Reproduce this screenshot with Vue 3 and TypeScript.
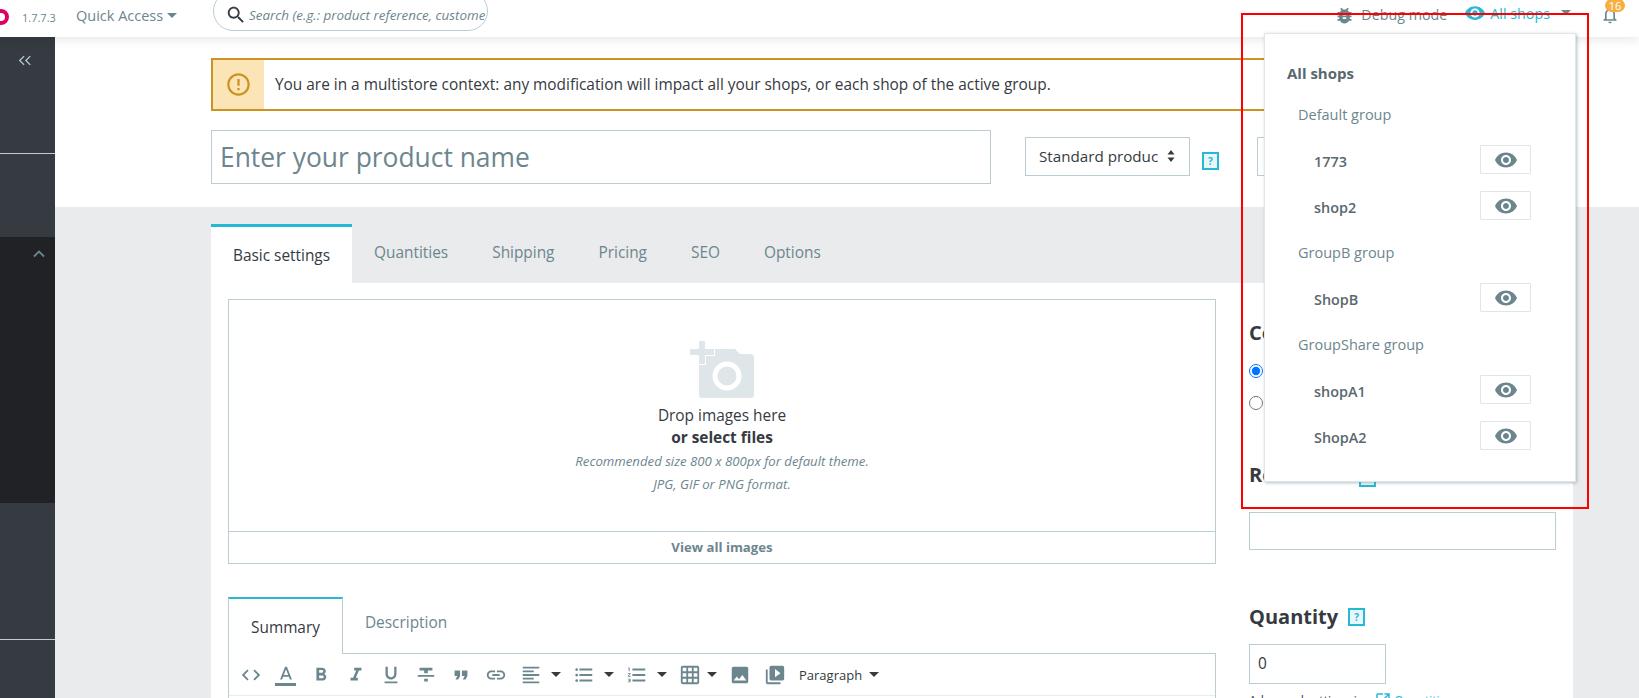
<script setup lang="ts">
interface Shop { name: string }
interface Group { name: string; shops: Shop[] }
interface Tool { d: string; caret?: boolean; bar?: boolean; narrow?: boolean }

const eye = 'M12 4.5C7 4.5 2.73 7.61 1 12c1.73 4.39 6 7.5 11 7.5s9.27-3.11 11-7.5c-1.73-4.39-6-7.5-11-7.5zM12 17c-2.76 0-5-2.24-5-5s2.24-5 5-5 5 2.24 5 5-2.24 5-5 5zm0-8c-1.66 0-3 1.34-3 3s1.34 3 3 3 3-1.34 3-3-1.34-3-3-3z';
const bug = 'M20 8h-2.81c-.45-.78-1.07-1.45-1.82-1.96L17 4.41 15.59 3l-2.17 2.17C12.96 5.06 12.49 5 12 5c-.49 0-.96.06-1.41.17L8.41 3 7 4.41l1.62 1.63C7.88 6.55 7.26 7.22 6.81 8H4v2h2.09c-.05.33-.09.66-.09 1v1H4v2h2v1c0 .34.04.67.09 1H4v2h2.81c1.04 1.79 2.97 3 5.19 3s4.15-1.21 5.19-3H20v-2h-2.09c.05-.33.09-.66.09-1v-1h2v-2h-2v-1c0-.34-.04-.67-.09-1H20V8zm-6 8h-4v-2h4v2zm0-4h-4v-2h4v2z';
const search = 'M15.5 14h-.79l-.28-.27C15.41 12.59 16 11.11 16 9.5 16 5.91 13.09 3 9.5 3S3 5.91 3 9.5 5.91 16 9.5 16c1.61 0 3.09-.59 4.23-1.57l.27.28v.79l5 4.99L20.49 19l-4.99-5zm-6 0C7.01 14 5 11.99 5 9.5S7.01 5 9.5 5 14 7.01 14 9.5 11.99 14 9.5 14z';
const bell = 'M12 22c1.1 0 2-.9 2-2h-4c0 1.1.9 2 2 2zm6-6v-5c0-3.07-1.63-5.64-4.5-6.32V4c0-.83-.67-1.5-1.5-1.5s-1.5.67-1.5 1.5v.68C7.64 5.36 6 7.92 6 11v5l-2 2v1h16v-1l-2-2zm-2 1H8v-6c0-2.48 1.51-4.5 4-4.5s4 2.02 4 4.5v6z';
const warn = 'M11 15h2v2h-2zm0-8h2v6h-2zm.99-5C6.47 2 2 6.48 2 12s4.47 10 9.99 10C17.52 22 22 17.52 22 12S17.52 2 11.99 2zM12 20c-4.42 0-8-3.58-8-8s3.58-8 8-8 8 3.58 8 8-3.58 8-8 8z';
const launch = 'M19 19H5V5h7V3H5c-1.11 0-2 .9-2 2v14c0 1.1.89 2 2 2h14c1.1 0 2-.9 2-2v-7h-2v7zM14 3v2h3.59l-9.83 9.83 1.41 1.41L19 6.41V10h2V3h-7z';

const tabs = ['Quantities', 'Shipping', 'Pricing', 'SEO', 'Options'];

const groups: Group[] = [
  { name: 'Default group', shops: [{ name: '1773' }, { name: 'shop2' }] },
  { name: 'GroupB group', shops: [{ name: 'ShopB' }] },
  { name: 'GroupShare group', shops: [{ name: 'shopA1' }, { name: 'ShopA2' }] },
];

const tools: Tool[] = [
  { d: 'M9.4 16.6L4.8 12l4.6-4.6L8 6l-6 6 6 6 1.4-1.4zm5.2 0l4.6-4.6-4.6-4.6L16 6l6 6-6 6-1.4-1.4z' },
  { d: 'M11 3L5.5 17h2.25l1.12-3h6.25l1.12 3h2.25L13 3h-2zm-1.38 9L12 5.67 14.38 12H9.62z', bar: true },
  { d: 'M15.6 10.79c.97-.67 1.65-1.77 1.65-2.79 0-2.26-1.75-4-4-4H7v14h7.04c2.09 0 3.71-1.7 3.71-3.79 0-1.52-.86-2.82-2.15-3.42zM10 6.5h3c.83 0 1.5.67 1.5 1.5s-.67 1.5-1.5 1.5h-3v-3zm3.5 9H10v-3h3.5c.83 0 1.5.67 1.5 1.5s-.67 1.5-1.5 1.5z' },
  { d: 'M10 4v3h2.21l-3.42 8H6v3h8v-3h-2.21l3.42-8H18V4z' },
  { d: 'M12 17c3.31 0 6-2.69 6-6V3h-2.5v8c0 1.93-1.57 3.5-3.5 3.5S8.5 12.93 8.5 11V3H6v8c0 3.31 2.69 6 6 6zm-7 2v2h14v-2H5z' },
  { d: 'M10 19h4v-3h-4v3zM5 4v3h5v3h4V7h5V4H5zM3 14h18v-2H3v2z' },
  { d: 'M6 17h3l2-4V7H5v6h3zm8 0h3l2-4V7h-6v6h3z' },
  { d: 'M3.9 12c0-1.71 1.39-3.1 3.1-3.1h4V7H7c-2.76 0-5 2.24-5 5s2.24 5 5 5h4v-1.9H7c-1.71 0-3.1-1.39-3.1-3.1zM8 13h8v-2H8v2zm9-6h-4v1.9h4c1.71 0 3.1 1.39 3.1 3.1s-1.39 3.1-3.1 3.1h-4V17h4c2.76 0 5-2.24 5-5s-2.24-5-5-5z' },
  { d: 'M15 15H3v2h12v-2zm0-8H3v2h12V7zM3 13h18v-2H3v2zm0 8h18v-2H3v2zM3 3v2h18V3H3z', caret: true },
  { d: 'M4 10.5c-.83 0-1.5.67-1.5 1.5s.67 1.5 1.5 1.5 1.5-.67 1.5-1.5-.67-1.5-1.5-1.5zm0-6c-.83 0-1.5.67-1.5 1.5S3.17 7.5 4 7.5 5.5 6.83 5.5 6 4.83 4.5 4 4.5zm0 12c-.83 0-1.5.68-1.5 1.5s.68 1.5 1.5 1.5 1.5-.68 1.5-1.5-.67-1.5-1.5-1.5zM7 19h14v-2H7v2zm0-6h14v-2H7v2zm0-8v2h14V5H7z', caret: true },
  { d: 'M2 17h2v.5H3v1h1v.5H2v1h3v-4H2v1zm1-9h1V4H2v1h1v3zm-1 3h1.8L2 13.1v.9h3v-1H3.2L5 10.9V10H2v1zm5-6v2h14V5H7zm0 14h14v-2H7v2zm0-6h14v-2H7v2z', caret: true },
  { d: 'M20 2H4c-1.1 0-2 .9-2 2v16c0 1.1.9 2 2 2h16c1.1 0 2-.9 2-2V4c0-1.1-.9-2-2-2zM8 20H4v-4h4v4zm0-6H4v-4h4v4zm0-6H4V4h4v4zm6 12h-4v-4h4v4zm0-6h-4v-4h4v4zm0-6h-4V4h4v4zm6 12h-4v-4h4v4zm0-6h-4v-4h4v4zm0-6h-4V4h4v4z', caret: true, narrow: true },
  { d: 'M21 19V5c0-1.1-.9-2-2-2H5c-1.1 0-2 .9-2 2v14c0 1.1.9 2 2 2h14c1.1 0 2-.9 2-2zM8.5 13.5l2.5 3.01L14.5 12l4.5 6H5l3.5-4.5z' },
  { d: 'M4 6H2v14c0 1.1.9 2 2 2h14v-2H4V6zm16-4H8c-1.1 0-2 .9-2 2v12c0 1.1.9 2 2 2h12c1.1 0 2-.9 2-2V4c0-1.1-.9-2-2-2zm-8 12.5v-9l6 4.5-6 4.5z' },
];
</script>

<template>
  <div class="page">
    <header class="topbar">
      <span class="logo"></span>
      <span class="version">1.7.7.3</span>
      <span class="quick">Quick Access<i class="caret"></i></span>
      <div class="search">
        <svg class="search-ico" viewBox="0 0 24 24"><path :d="search" /></svg>
        <span class="search-text">Search (e.g.: product reference, custome</span>
      </div>
      <div class="top-right">
        <svg class="bug" viewBox="0 0 24 24"><path :d="bug" /></svg>
        <span class="debug">Debug mode</span>
        <svg class="shop-eye" viewBox="0 0 24 24"><path :d="eye" /></svg>
        <span class="shops-link">All shops</span>
        <i class="caret shops-caret"></i>
        <div class="bell-wrap">
          <svg class="bell" viewBox="0 0 24 24"><path :d="bell" /></svg>
          <span class="badge">16</span>
        </div>
      </div>
    </header>

    <div class="body">
      <aside class="sidebar">
        <div class="nav-top">
          <svg class="collapse" viewBox="0 0 16 12"><path d="M7 1L2 6l5 5M14 1L9 6l5 5" /></svg>
        </div>
        <div class="nav-band"></div>
        <div class="nav-open">
          <svg class="chev" viewBox="0 0 12 8"><path d="M1 6.5l5-5 5 5" /></svg>
          <span class="nav-s">s</span>
        </div>
        <div class="nav-band nav-lined"></div>
      </aside>

      <main class="main">
        <section class="head">
          <div class="alert">
            <div class="alert-ico">
              <svg viewBox="0 0 24 24"><path :d="warn" /></svg>
            </div>
            <p>You are in a multistore context: any modification will impact all your shops, or each shop of the active group.</p>
          </div>
          <div class="name-row">
            <div class="name-input">Enter your product name</div>
            <div class="type-select">
              <span>Standard produc</span>
              <svg viewBox="0 0 10 14"><path d="M5 1l3.5 4.5h-7zM5 13L1.5 8.5h7z" /></svg>
            </div>
            <span class="help">?</span>
            <div class="name-extra"></div>
          </div>
        </section>

        <section class="content">
          <nav class="tabs">
            <span class="tab tab-active">Basic settings</span>
            <span v-for="t in tabs" :key="t" class="tab">{{ t }}</span>
          </nav>
          <div class="card">
            <div class="left">
              <div class="dropzone">
                <div class="drop-body">
                  <svg class="camera" viewBox="0 0 65 57">
                    <path d="M9 14h12V8h24l5 5h10a4 4 0 0 1 4 4v37a3 3 0 0 1-3 3H12a3 3 0 0 1-3-3z" />
                    <path d="M9 0h6v8h9v6h-9v9H9v-9H0V8h9z" stroke="#fff" stroke-width="2" paint-order="stroke" />
                    <circle cx="37" cy="35" r="12" fill="none" stroke="#fff" stroke-width="5" />
                  </svg>
                  <div class="drop-title">Drop images here</div>
                  <div class="drop-select">or select files</div>
                  <div class="drop-note">Recommended size 800 x 800px for default theme.</div>
                  <div class="drop-note">JPG, GIF or PNG format.</div>
                </div>
                <div class="drop-foot">View all images</div>
              </div>

              <div class="editor-tabs">
                <span class="etab etab-active">Summary</span>
                <span class="etab">Description</span>
                <span class="etab-rest"></span>
              </div>
              <div class="editor">
                <div class="toolbar">
                  <span v-for="(tool, i) in tools" :key="i" class="tool" :class="{ 'has-caret': tool.caret, narrow: tool.narrow }">
                    <span class="tool-ico">
                      <svg viewBox="0 0 24 24"><path :d="tool.d" /></svg>
                      <i v-if="tool.bar" class="color-bar"></i>
                    </span>
                    <i v-if="tool.caret" class="caret tool-caret"></i>
                  </span>
                  <span class="para">Paragraph<i class="caret"></i></span>
                </div>
              </div>
            </div>

            <div class="right">
              <h2 class="combi-title">Combinations</h2>
              <label class="radio"><input type="radio" name="kind" checked /> Simple product</label>
              <label class="radio"><input type="radio" name="kind" /> Product with combinations</label>
              <h2 class="ref-title">Reference <span class="help">?</span></h2>
              <div class="ref-input"></div>
              <h2 class="qty-title">Quantity <span class="help">?</span></h2>
              <div class="qty-input">0</div>
              <p class="adv">Advanced settings in
                <svg viewBox="0 0 24 24"><path :d="launch" /></svg><a>Quantities</a>
              </p>
            </div>
          </div>
        </section>
      </main>
    </div>

    <div class="shop-menu">
      <div class="menu-all">All shops</div>
      <template v-for="g in groups" :key="g.name">
        <div class="menu-group">{{ g.name }}</div>
        <div v-for="s in g.shops" :key="s.name" class="menu-shop">
          <span>{{ s.name }}</span>
          <span class="eye-btn"><svg viewBox="0 0 24 24"><path :d="eye" /></svg></span>
        </div>
      </template>
    </div>

    <div class="red-mark"></div>
  </div>
</template>

<style>
html, body { margin: 0; background: #fff; }
</style>

<style scoped>
.page {
  position: relative;
  width: 1639px;
  height: 698px;
  overflow: hidden;
  display: flex;
  flex-direction: column;
  font-family: "Open Sans", "Noto Sans", sans-serif;
  color: #363a41;
}
.caret {
  display: inline-block;
  width: 0;
  height: 0;
  border-left: 5px solid transparent;
  border-right: 5px solid transparent;
  border-top: 5px solid #6c868e;
}

/* top bar */
.topbar {
  position: relative;
  z-index: 3;
  height: 37px;
  flex: none;
  display: flex;
  align-items: center;
  background: #fff;
  box-shadow: 0 0 14px rgba(0, 0, 0, .14);
}
.logo {
  width: 16px;
  height: 16px;
  margin: -4px 0 0 -7px;
  box-sizing: border-box;
  border: 4px solid #df0067;
  border-radius: 50%;
}
.version {
  margin-left: 13px;
  width: 54px;
  font-size: 11px;
  color: #6c868e;
  margin-top: -2px;
}
.quick {
  font-size: 14.5px;
  color: #6c868e;
  display: flex;
  align-items: center;
  gap: 4px;
  width: 137px;
  margin-top: -6px;
}
.search {
  width: 275px;
  height: 40px;
  margin-top: -15px;
  box-sizing: border-box;
  border: 1px solid #bbcdd2;
  border-radius: 20px;
  display: flex;
  align-items: center;
  padding: 8px 0 0 11px;
  overflow: hidden;
  white-space: nowrap;
}
.search-ico { width: 22px; height: 22px; flex: none; fill: #363a41; }
.search-text {
  margin-left: 2px;
  font-size: 13.4px;
  font-style: italic;
  color: #6c868e;
}
.top-right {
  margin-left: auto;
  display: flex;
  align-items: center;
  height: 100%;
}
.bug { width: 21px; height: 21px; fill: #6c868e; margin-top: -6px; margin-left: -2px; }
.debug { margin-left: 6px; font-size: 14.3px; color: #6c868e; margin-top: -8px; }
.shop-eye { width: 22px; height: 22px; fill: #25b9d7; margin-left: 17px; margin-top: -11px; }
.shops-link { margin-left: 4px; font-size: 14.3px; color: #25b9d7; margin-top: -11px; }
.shops-caret { margin-left: 11px; margin-top: -13px; }
.bell-wrap { position: relative; width: 68px; height: 100%; }
.bell {
  position: absolute;
  left: 29px;
  top: 5px;
  width: 20px;
  height: 20px;
  fill: #6c868e;
}
.badge {
  position: absolute;
  left: 34px;
  top: -1px;
  width: 20px;
  height: 13px;
  border-radius: 7px;
  background: #f5b041;
  color: #fff;
  font-size: 11px;
  line-height: 13px;
  text-align: center;
}

.body { flex: 1; display: flex; min-height: 0; }

/* sidebar */
.sidebar {
  width: 55px;
  flex: none;
  display: flex;
  flex-direction: column;
  background: #363a41;
}
.nav-top {
  height: 117px;
  flex: none;
  box-sizing: border-box;
  border-bottom: 1px solid #bbcdd2;
  padding: 18px 0 0 18px;
}
.collapse { display: block; width: 14px; height: 11px; fill: none; stroke: #bbcdd2; stroke-width: 1.5; }
.nav-band { height: 83px; flex: none; }
.nav-open {
  position: relative;
  height: 266px;
  flex: none;
  background: #202226;
}
.chev {
  position: absolute;
  left: 33px;
  top: 13px;
  width: 12px;
  height: 8px;
  fill: none;
  stroke: #6c868e;
  stroke-width: 1.8;
}
.nav-s {
  position: absolute;
  left: -5px;
  top: 127px;
  font-size: 10px;
  color: #bbcdd2;
}
.nav-lined {
  flex: 1;
  box-sizing: border-box;
  height: auto;
  background: linear-gradient(#363a41 136px, #bbcdd2 136px, #bbcdd2 137px, #363a41 137px);
}

/* product head */
.main { flex: 1; min-width: 0; display: flex; flex-direction: column; }
.head {
  height: 170px;
  flex: none;
  box-sizing: border-box;
  padding: 21px 0 0 156px;
  background: #fff;
}
.alert {
  width: 1345px;
  height: 53px;
  box-sizing: border-box;
  border: 2px solid #cd9321;
  display: flex;
  align-items: center;
}
.alert-ico {
  width: 51px;
  height: 100%;
  flex: none;
  background: #fbe4b5;
  display: flex;
  align-items: center;
  justify-content: center;
}
.alert-ico svg { width: 27px; height: 27px; fill: #cd9321; }
.alert p { margin: 0 0 0 11px; font-size: 15.4px; color: #363a41; }
.name-row { display: flex; align-items: flex-start; margin-top: 19px; }
.name-input {
  width: 780px;
  height: 54px;
  box-sizing: border-box;
  border: 1px solid #bbcdd2;
  padding-left: 8px;
  font-size: 26.4px;
  line-height: 52px;
  color: #6c868e;
}
.type-select {
  width: 165px;
  height: 39px;
  margin: 7px 0 0 34px;
  box-sizing: border-box;
  border: 1px solid #bbcdd2;
  display: flex;
  align-items: center;
  justify-content: space-between;
  padding: 0 13px 2px;
  font-size: 15.2px;
  white-space: nowrap;
  overflow: hidden;
}
.type-select svg { width: 10px; height: 14px; fill: #363a41; flex: none; }
.help {
  display: inline-block;
  width: 17px;
  height: 18px;
  box-sizing: border-box;
  border: 2px solid #25b9d7;
  background: #e8f7fa;
  color: #25b9d7;
  font-size: 10px;
  font-weight: 700;
  line-height: 14px;
  text-align: center;
}
.name-row > .help { margin: 22px 0 0 12px; }
.name-extra {
  width: 200px;
  height: 39px;
  margin: 7px 0 0 38px;
  box-sizing: border-box;
  border: 1px solid #bbcdd2;
}

/* gray area with tabs */
.content {
  flex: 1;
  min-height: 0;
  box-sizing: border-box;
  padding: 17px 66px 0 156px;
  background: #eaebec;
}
.tabs { display: flex; height: 59px; }
.tab {
  padding: 0 22px;
  font-size: 15.4px;
  line-height: 58px;
  color: #6c868e;
}
.tab-active {
  background: #fff;
  border-top: 3px solid #25b9d7;
  height: 56px;
  line-height: 57px;
  color: #363a41;
}
.card {
  display: flex;
  background: #fff;
  padding: 16px 17px 0;
  height: 420px;
  box-sizing: border-box;
}
.left { width: 988px; flex: none; }
.dropzone { height: 265px; box-sizing: border-box; border: 1px solid #bbcdd2; display: flex; flex-direction: column; }
.drop-body { flex: 1; display: flex; flex-direction: column; align-items: center; padding-top: 41px; }
.camera { width: 65px; height: 57px; fill: #dfe6e9; }
.drop-title { margin-top: 7px; font-size: 15.4px; line-height: 22px; }
.drop-select { font-size: 15.4px; font-weight: 700; line-height: 22px; }
.drop-note { font-size: 13.2px; font-style: italic; color: #6c868e; line-height: 23px; }
.drop-select + .drop-note { margin-top: 1px; }
.drop-foot {
  height: 31px;
  flex: none;
  border-top: 1px solid #bbcdd2;
  text-align: center;
  font-size: 13.2px;
  font-weight: 700;
  line-height: 31px;
  color: #6c868e;
}

.editor-tabs { display: flex; margin-top: 33px; height: 57px; }
.etab {
  padding: 0 22px;
  font-size: 15.4px;
  line-height: 52px;
  color: #6c868e;
  box-sizing: border-box;
  border-bottom: 1px solid #bbcdd2;
}
.etab-active {
  border: 1px solid #bbcdd2;
  border-top: 2px solid #25b9d7;
  border-bottom: 0;
  line-height: 58px;
  color: #363a41;
}
.etab-rest { flex: 1; border-bottom: 1px solid #bbcdd2; }
.editor { border-left: 1px solid #bbcdd2; border-right: 1px solid #bbcdd2; height: 100px; }
.toolbar {
  display: flex;
  align-items: center;
  height: 42px;
  box-sizing: border-box;
  padding-left: 4px;
  border-bottom: 1px solid #eaebec;
}
.tool { width: 35px; flex: none; display: flex; align-items: center; }
.tool.has-caret { width: 53px; }
.tool.narrow { width: 50px; }
.tool-ico {
  position: relative;
  width: 35px;
  flex: none;
  display: flex;
  justify-content: center;
}
.tool-ico svg { width: 22px; height: 22px; fill: #6c868e; display: block; }
.color-bar {
  position: absolute;
  left: 7px;
  right: 7px;
  bottom: 0;
  height: 3px;
  background: #6c868e;
}
.tool-caret { margin-left: 3px; border-top-color: #363a41; }
.tool.narrow .tool-caret { margin-left: 0; }
.para {
  margin-left: 7px;
  display: flex;
  align-items: center;
  gap: 7px;
  font-size: 13px;
  color: #363a41;
}
.para .caret { border-top-color: #363a41; }

/* right column */
.right { margin-left: 33px; width: 307px; flex: none; }
.right h2 { margin: 0; font-size: 20px; font-weight: 700; line-height: 24px; color: #363a41; }
.combi-title { padding-top: 22px; }
.radio {
  display: flex;
  align-items: center;
  height: 32px;
  font-size: 15.4px;
  white-space: nowrap;
}
.radio input { margin: 0 4px 0 0; width: 14px; height: 14px; }
.radio:first-of-type { margin-top: 10px; }
.ref-title { margin-top: 44px !important; }
.ref-title .help { margin-left: 4px; }
.ref-input { margin-top: 25px; height: 38px; box-sizing: border-box; border: 1px solid #bbcdd2; }
.qty-title { margin-top: 55px !important; display: flex; align-items: center; gap: 10px; }
.qty-input {
  margin-top: 15px;
  width: 137px;
  height: 40px;
  box-sizing: border-box;
  border: 1px solid #bbcdd2;
  padding-left: 8px;
  font-size: 15.4px;
  line-height: 38px;
}
.adv { margin: 7px 0 0; font-size: 12px; line-height: 16px; color: #363a41; white-space: nowrap; }
.adv svg { width: 18px; height: 18px; fill: #25b9d7; vertical-align: -4px; margin-left: 7px; }
.adv a { color: #25b9d7; margin-left: 2px; }

/* multistore dropdown */
.shop-menu {
  position: absolute;
  z-index: 5;
  left: 1264px;
  top: 33px;
  width: 312px;
  height: 449px;
  box-sizing: border-box;
  background: #fff;
  border: 1px solid #dfe6e9;
  box-shadow: 1px 1px 3px rgba(108, 134, 142, .5);
  padding: 27px 44px 0 22px;
  color: #6c868e;
}
.menu-all {
  height: 24px;
  line-height: 24px;
  margin-bottom: 7px;
  font-size: 15px;
  font-weight: 700;
  color: #59686e;
}
.menu-group {
  height: 46px;
  line-height: 46px;
  padding-left: 11px;
  font-size: 14.5px;
  color: #6c868e;
}
.menu-shop {
  height: 46px;
  display: flex;
  align-items: center;
  justify-content: space-between;
  padding-left: 27px;
  font-size: 14.4px;
  font-weight: 600;
  color: #59686e;
}
.eye-btn {
  width: 51px;
  height: 29px;
  box-sizing: border-box;
  border: 1px solid #dfe6e9;
  border-radius: 1px;
  display: flex;
  align-items: center;
  justify-content: center;
  margin-top: -3px;
}
.eye-btn svg { width: 24px; height: 24px; fill: #6c868e; }

.red-mark {
  position: absolute;
  z-index: 6;
  left: 1241px;
  top: 13px;
  width: 348px;
  height: 496px;
  box-sizing: border-box;
  border: 2px solid #f00;
  pointer-events: none;
}
</style>
